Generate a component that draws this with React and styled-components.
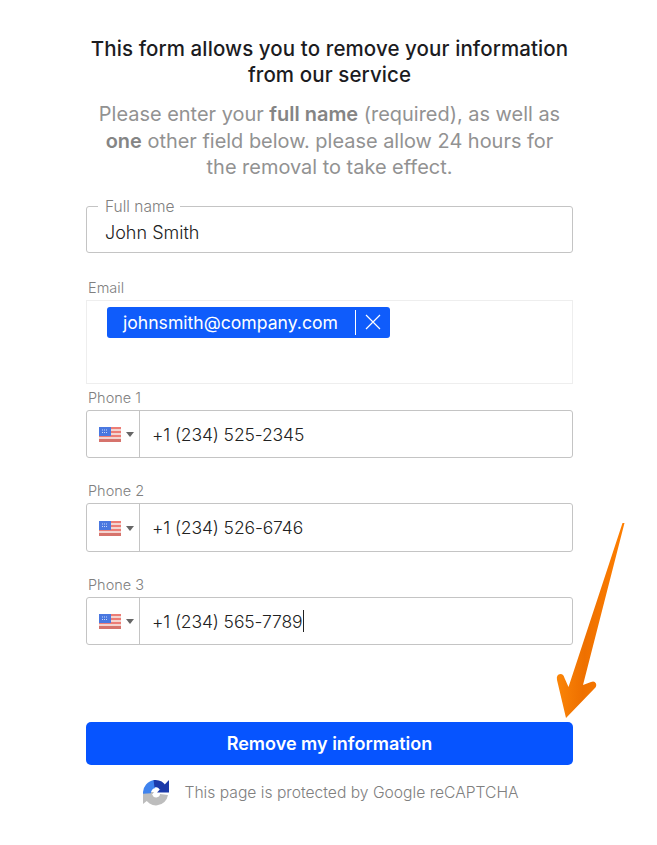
import styled, { createGlobalStyle } from 'styled-components';

const GlobalStyle = createGlobalStyle`
  body {
    margin: 0;
    background: #fff;
    font-family: Inter, "Noto Sans", sans-serif;
  }
`;

const Page = styled.div`
  position: relative;
  width: 657px;
  height: 845px;
  overflow: hidden;
  box-sizing: border-box;
  padding: 36px 84px 0 86px;
`;

const Heading = styled.h1`
  margin: 0;
  font-size: 20.5px;
  line-height: 26px;
  font-weight: 500;
  text-align: center;
  letter-spacing: 0.1px;
  color: #1c1c1f;
`;

const Intro = styled.p`
  margin: 13px 0 0;
  font-size: 19.95px;
  line-height: 26.5px;
  font-weight: 400;
  text-align: center;
  color: #929292;

  strong {
    font-weight: 600;
    color: #858585;
  }
`;

const NameField = styled.div`
  position: relative;
  margin-top: 25px;
  height: 47px;
  box-sizing: border-box;
  padding: 14px 0 0 18px;
  border: 1px solid #c4c4c4;
  border-radius: 3px;
`;

const NameLabel = styled.span`
  position: absolute;
  left: 11px;
  top: -9px;
  padding: 0 6px 0 7px;
  background: #fff;
  font-size: 15.5px;
  line-height: 18px;
  font-weight: 300;
  color: #808080;
`;

const NameValue = styled.div`
  font-size: 18px;
  line-height: 24px;
  font-weight: 300;
  color: #222;
`;

const Label = styled.div`
  margin: ${(p) => p.$top}px 0 3px 2px;
  font-size: 14.5px;
  line-height: 18px;
  font-weight: 300;
  color: #808080;
`;

const EmailBox = styled.div`
  height: 84px;
  box-sizing: border-box;
  border: 1px solid #eeeeee;
  padding: 6px 20px;
`;

const Chip = styled.div`
  display: inline-flex;
  align-items: center;
  height: 31px;
  border-radius: 3px;
  background: #0f5cfb;
  color: #fff;
  font-size: 17.6px;
  padding-left: 16px;
`;

const ChipClose = styled.span`
  display: flex;
  align-items: center;
  height: 25px;
  margin-left: 17px;
  padding: 0 9px;
  border-left: 1px solid #fff;
`;

const PhoneRow = styled.div`
  display: flex;
  height: ${(p) => p.$height}px;
  box-sizing: border-box;
  border: 1px solid #c4c4c4;
  border-radius: 3px;
`;

const FlagButton = styled.div`
  display: flex;
  align-items: center;
  gap: 5px;
  width: 53px;
  flex: none;
  box-sizing: border-box;
  padding: 2px 0 0 12px;
  border-right: 1px solid #c4c4c4;
`;

const Caret = styled.span`
  width: 0;
  height: 0;
  border-left: 4px solid transparent;
  border-right: 4px solid transparent;
  border-top: 5px solid #666;
`;

const PhoneValue = styled.div`
  display: flex;
  align-items: center;
  padding: 1px 0 0 12px;
  font-size: 17.5px;
  font-weight: 300;
  letter-spacing: -0.12px;
  color: #222;
`;

const TextCursor = styled.span`
  width: 1px;
  height: 22px;
  margin-left: 1px;
  background: #222;
`;

const SubmitButton = styled.button`
  display: block;
  width: 100%;
  height: 43px;
  margin-top: 77px;
  border: 0;
  border-radius: 5px;
  background: #0654ff;
  color: #fff;
  font-family: inherit;
  font-size: 18px;
  font-weight: 600;
`;

const Protection = styled.div`
  display: flex;
  align-items: center;
  justify-content: center;
  gap: 14px;
  margin-top: 14px;
  padding-left: 3px;
  font-size: 15.65px;
  font-weight: 300;
  color: #808080;
`;

const Arrow = styled.svg`
  position: absolute;
  left: 550px;
  top: 515px;
`;

function UsFlag() {
  return (
    <svg width="22" height="15" viewBox="0 0 22 15">
      <rect width="22" height="15" fill="#f3d4d0" />
      <rect y="0" width="22" height="2" fill="#ec7d76" />
      <rect y="4" width="22" height="2" fill="#ec7d76" />
      <rect y="8" width="22" height="2" fill="#ec7d76" />
      <rect y="12" width="22" height="3" fill="#d6736c" />
      <rect width="12" height="9" fill="#4a78e0" />
      <path d="M3 3h6M3 5.500h6" stroke="#c8d8f8" strokeWidth="1" strokeDasharray="1 1" />
    </svg>
  );
}

function CloseIcon() {
  return (
    <svg width="16" height="16" viewBox="0 0 16 16" fill="none" stroke="#fff" strokeWidth="1.2">
      <path d="M1 1l14 14M15 1L1 15" />
    </svg>
  );
}

function RecaptchaIcon() {
  return (
    <svg width="27" height="27" viewBox="0 0 27 27" fill="none">
      <path d="M21 15.500A8 8 0 0 1 5.500 17" stroke="#bdbdbd" strokeWidth="8" />
      <path d="M0 13v12l5-4 6-8z" fill="#bdbdbd" />
      <path d="M4 14.500A9 9 0 0 1 12 5" stroke="#3f83ee" strokeWidth="8" />
      <path d="M11 4.500A9 9 0 0 1 20 9" stroke="#1c3aa9" strokeWidth="7" />
      <path d="M26 1v12.500H14z" fill="#1c3aa9" />
    </svg>
  );
}

function PhoneField({ label, top, height, value, focused }) {
  return (
    <>
      <Label $top={top}>{label}</Label>
      <PhoneRow $height={height}>
        <FlagButton>
          <UsFlag />
          <Caret />
        </FlagButton>
        <PhoneValue>
          {value}
          {focused && <TextCursor />}
        </PhoneValue>
      </PhoneRow>
    </>
  );
}

export default function App() {
  return (
    <Page>
      <GlobalStyle />
      <Heading>
        This form allows you to remove your information
        <br />
        from our service
      </Heading>
      <Intro>
        Please enter your <strong>full name</strong> (required), as well as
        <br />
        <strong>one</strong> other field below. please allow 24 hours for
        <br />
        the removal to take effect.
      </Intro>
      <NameField>
        <NameLabel>Full name</NameLabel>
        <NameValue>John Smith</NameValue>
      </NameField>
      <Label $top={26}>Email</Label>
      <EmailBox>
        <Chip>
          johnsmith@company.com
          <ChipClose>
            <CloseIcon />
          </ChipClose>
        </Chip>
      </EmailBox>
      <PhoneField label="Phone 1" top={5} height={48} value="+1 (234) 525-2345" />
      <PhoneField label="Phone 2" top={24} height={49} value="+1 (234) 526-6746" />
      <PhoneField label="Phone 3" top={24} height={48} value="+1 (234) 565-7789" focused />
      <SubmitButton>Remove my information</SubmitButton>
      <Protection>
        <RecaptchaIcon />
        This page is protected by Google reCAPTCHA
      </Protection>
      <Arrow width="90" height="215" viewBox="0 0 90 215">
        <defs>
          <linearGradient id="arrowFill" x1="0" y1="0" x2="1" y2="0.15">
            <stop offset="0" stopColor="#ff8c0a" />
            <stop offset="0.5" stopColor="#ee7000" />
            <stop offset="1" stopColor="#ff7f00" />
          </linearGradient>
        </defs>
        <path
          d="M72.500 8 L74.500 8 L33 170 L41 167 Q44.500 165.500 46 168.500 Q47 171.500 44 174 L16 203 L7 165 Q6 159.500 10.500 159 Q13.500 159 14.500 163 L18.500 172 Z"
          fill="url(#arrowFill)"
        />
      </Arrow>
    </Page>
  );
}
